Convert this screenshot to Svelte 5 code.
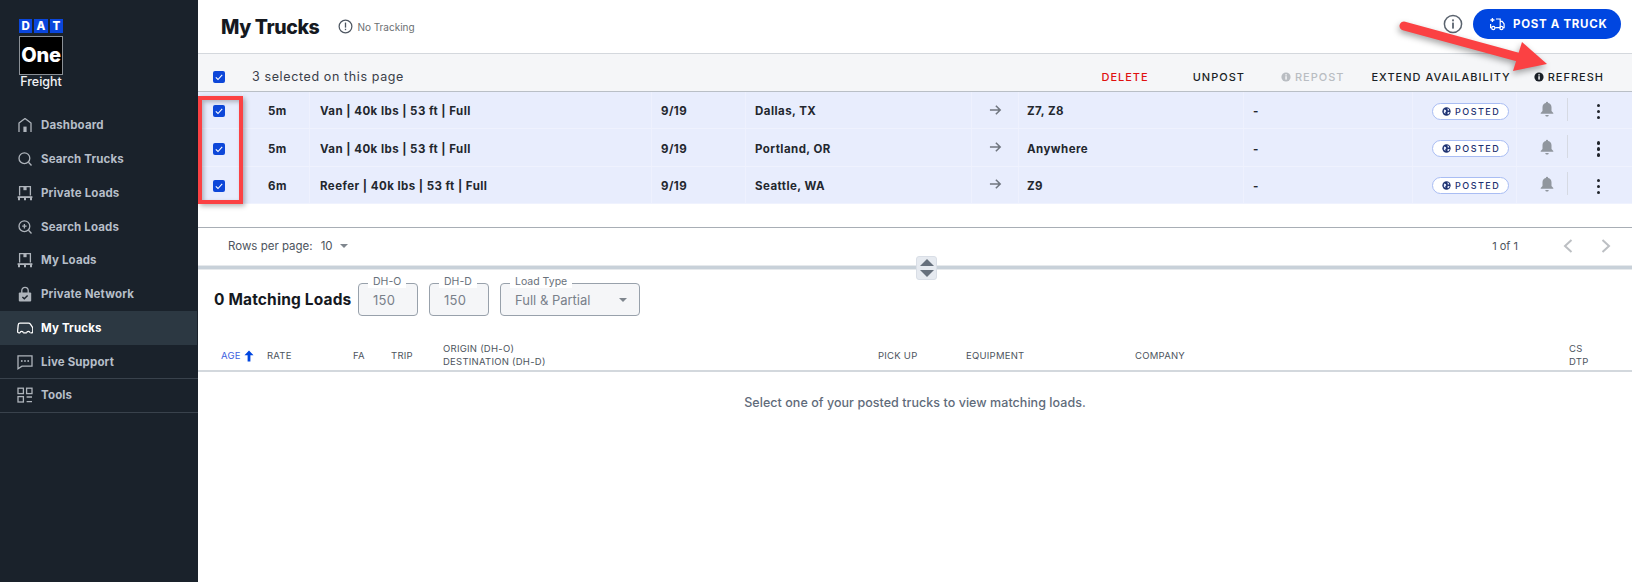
<script>
  const nav = [
    { label: 'Dashboard', icon: 'home' },
    { label: 'Search Trucks', icon: 'search' },
    { label: 'Private Loads', icon: 'load' },
    { label: 'Search Loads', icon: 'searchplus' },
    { label: 'My Loads', icon: 'load' },
    { label: 'Private Network', icon: 'lock' },
    { label: 'My Trucks', icon: 'truck', active: true },
    { label: 'Live Support', icon: 'chat' },
    { label: 'Tools', icon: 'tools' }
  ];
  const rows = [
    { age: '5m', equip: 'Van | 40k lbs | 53 ft | Full', date: '9/19', origin: 'Dallas, TX', dest: 'Z7, Z8' },
    { age: '5m', equip: 'Van | 40k lbs | 53 ft | Full', date: '9/19', origin: 'Portland, OR', dest: 'Anywhere' },
    { age: '6m', equip: 'Reefer | 40k lbs | 53 ft | Full', date: '9/19', origin: 'Seattle, WA', dest: 'Z9' }
  ];
  const heads = [
    { cls: 'h-rate', lines: ['RATE'] },
    { cls: 'h-fa', lines: ['FA'] },
    { cls: 'h-trip', lines: ['TRIP'] },
    { cls: 'h-origin', lines: ['ORIGIN (DH-O)', 'DESTINATION (DH-D)'] },
    { cls: 'h-pick', lines: ['PICK UP'] },
    { cls: 'h-equip', lines: ['EQUIPMENT'] },
    { cls: 'h-company', lines: ['COMPANY'] },
    { cls: 'h-cs', lines: ['CS', 'DTP'] }
  ];
</script>

{#snippet check()}
  <span class="check">
    <svg viewBox="0 0 12 12" width="12" height="12"><path d="M2.8 6.3l2.2 2.2 4.2-4.6" fill="none" stroke="#fff" stroke-width="1.1"/></svg>
  </span>
{/snippet}

{#snippet infoDot(color)}
  <svg class="info-dot" viewBox="0 0 10 10" width="10" height="10">
    <circle cx="5" cy="5" r="4.6" fill={color}/>
    <rect x="4.3" y="4.2" width="1.5" height="3.4" fill="#f5f6f8"/>
    <rect x="4.3" y="2.2" width="1.5" height="1.3" fill="#f5f6f8"/>
  </svg>
{/snippet}

{#snippet navIcon(name)}
  <svg class="nav-icon" viewBox="0 0 16 16" width="16" height="16" fill="none" stroke="currentColor" stroke-width="1.3">
    {#if name === 'home'}
      <path d="M2 15V6L8 1.600 14 6v9" stroke-linejoin="round"/>
      <rect x="6.400" y="9.600" width="3.200" height="5.400" fill="currentColor" stroke="none"/>
    {:else if name === 'search'}
      <circle cx="7.400" cy="7.200" r="5.400"/><path d="M11.500 11.300l3 3.200"/>
    {:else if name === 'searchplus'}
      <circle cx="7.400" cy="7.200" r="5.400"/><path d="M11.500 11.300l3 3.200M7.400 5v4.400M5.200 7.200h4.400" />
    {:else if name === 'load'}
      <path d="M2.600 10.600V1.600h10.800v9"/>
      <rect x="6.400" y="1.600" width="3.200" height="3.600" fill="currentColor" stroke="none"/>
      <rect x="0.600" y="11.200" width="14.800" height="1.800" fill="currentColor" stroke="none"/>
      <path d="M2 13v2.200M8 13v2.200M14 13v2.200" stroke-width="2"/>
    {:else if name === 'lock'}
      <path d="M4.800 7V4.600C4.800 2.700 6.200 1.400 8 1.400s3.200 1.300 3.200 3.200V7"/>
      <rect x="1.800" y="6.600" width="12.400" height="8.800" rx="1" fill="currentColor" stroke="none"/>
      <path d="M5.400 11l1.900 1.800 3.300-3.400" stroke="#1a222b" stroke-width="1.400"/>
    {:else if name === 'truck'}
      <path d="M3.200 12.800H2C1 12.800.5 12.200.6 11.200L1.200 5c.1-1.100.7-1.800 1.800-1.800h8.600c.8 0 1.300.3 1.800 1l2 2.900c.3.500.4.900.4 1.400v2.900c0 .9-.4 1.400-1.300 1.400h-1.100M6.200 12.800h3.600"/>
      <path d="M3.200 12.800a1.500 1.500 0 0 1 3 0M9.800 12.800a1.500 1.500 0 0 1 3 0"/>
    {:else if name === 'chat'}
      <path d="M1 1.800h14v10.400H5l-4 2.600z"/>
      <circle cx="4.800" cy="7" r=".9" fill="currentColor" stroke="none"/>
      <circle cx="8" cy="7" r=".9" fill="currentColor" stroke="none"/>
      <circle cx="11.200" cy="7" r=".9" fill="currentColor" stroke="none"/>
    {:else if name === 'tools'}
      <rect x="1" y="1.200" width="5.400" height="5.400"/><rect x="9.600" y="1.200" width="5.400" height="5.400"/>
      <rect x="1" y="9.600" width="5.400" height="5.400"/><path d="M9.600 10h5.400M9.600 14.600h5.400"/>
    {/if}
  </svg>
{/snippet}

<div class="app">
  <aside class="sidebar">
    <div class="logo">
      <div class="dat"><span>D</span><span>A</span><span>T</span></div>
      <div class="one">One</div>
      <div class="freight">Freight</div>
    </div>
    <nav>
      {#each nav as item}
        <div class="nav-item" class:active={item.active}>
          {@render navIcon(item.icon)}
          <span>{item.label}</span>
        </div>
      {/each}
    </nav>
  </aside>

  <main class="main">
    <header class="topbar">
      <h1>My Trucks</h1>
      <svg class="warn" viewBox="0 0 16 16" width="15" height="15" fill="none">
        <circle cx="8" cy="8" r="6.800" stroke="#4d5661" stroke-width="1.300"/>
        <rect x="7.300" y="3.800" width="1.400" height="5.400" fill="#4d5661"/>
        <rect x="7.300" y="10.400" width="1.400" height="1.500" fill="#4d5661"/>
      </svg>
      <span class="tracking">No Tracking</span>
      <span class="grow"></span>
      <svg class="help" viewBox="0 0 20 20" width="20" height="20" fill="none">
        <circle cx="10" cy="10" r="8.600" stroke="#5a636e" stroke-width="1.500"/>
        <rect x="9.100" y="8.600" width="1.800" height="6" fill="#5a636e"/>
        <rect x="9.100" y="5.400" width="1.800" height="1.900" fill="#5a636e"/>
      </svg>
      <button class="post">
        <svg viewBox="0 0 16 14" width="16" height="14" fill="none" stroke="#fff" stroke-width="1.200">
          <path d="M3.400 1v4M1.400 3h4" stroke-width="1.300"/>
          <path d="M7 2h4.200v8.600H6.200M11.200 4.400h2l1.900 2.600v3.600h-1.200M1.600 7v3.600h1"/>
          <circle cx="4.300" cy="11" r="1.600"/><circle cx="12.400" cy="11" r="1.600"/>
        </svg>
        POST A TRUCK
      </button>
    </header>

    <section class="toolbar">
      <div class="tb-check">{@render check()}</div>
      <span class="selected">3 selected on this page</span>
      <span class="grow"></span>
      <span class="act delete">DELETE</span>
      <span class="act unpost">UNPOST</span>
      <span class="act repost">{@render infoDot('#b9bdc2')} REPOST</span>
      <span class="act extend">EXTEND AVAILABILITY</span>
      <span class="act refresh">{@render infoDot('#1a1f26')} REFRESH</span>
    </section>

    <section class="rows">
      {#each rows as r}
        <div class="row">
          <div class="cell c-check">{@render check()}</div>
          <div class="cell c-age">{r.age}</div>
          <div class="cell c-equip">{r.equip}</div>
          <div class="cell c-date">{r.date}</div>
          <div class="cell c-origin">{r.origin}</div>
          <div class="cell c-arrow">
            <svg viewBox="0 0 14 12" width="13" height="12" fill="none" stroke="#70767f" stroke-width="1.700"><path d="M1 6h11M7.400 1.400L12 6l-4.600 4.600"/></svg>
          </div>
          <div class="cell c-dest">{r.dest}</div>
          <div class="cell c-dash">-</div>
          <div class="cell c-status">
            <span class="pill">
              <svg viewBox="0 0 10 10" width="9" height="9"><circle cx="5" cy="5" r="4.600" fill="#1d3170"/><path d="M2.200 2.800l2 .4.600 1.400-1.200 1.200.2 2L2 6zM6 1.400l1.600.8.400 1.600-1.600.2zM6.400 5.400l2.200.4-1.400 2.200-1.200-.2z" fill="#e8edfd"/></svg>
              POSTED
            </span>
          </div>
          <div class="cell c-bell">
            <svg viewBox="0 0 14 16" width="14" height="16"><path d="M7 0.800c.7 0 1.100.4 1.200 1.100 2.100.5 3.300 2.200 3.300 4.400v3.600l1.800 2.200v.6H.7v-.6l1.800-2.200V6.300c0-2.200 1.200-3.900 3.300-4.400C5.900 1.200 6.300.8 7 .8z" fill="#90969e"/><path d="M5.300 14h3.400c0 1-.7 1.600-1.700 1.600S5.300 15 5.300 14z" fill="#90969e"/></svg>
            <i class="sep"></i>
          </div>
          <div class="cell c-menu"><i></i><i></i><i></i></div>
        </div>
      {/each}
    </section>

    <section class="pager">
      <span class="rpp">Rows per page:</span>
      <span class="rpp-val">10</span>
      <span class="caret small"></span>
      <span class="grow"></span>
      <span class="count">1 of 1</span>
      <svg class="chev" viewBox="0 0 10 14" width="10" height="14" fill="none" stroke="#bcbfc3" stroke-width="2"><path d="M8.500 1L2 7l6.500 6"/></svg>
      <svg class="chev next" viewBox="0 0 10 14" width="10" height="14" fill="none" stroke="#bcbfc3" stroke-width="2"><path d="M1.500 1L8 7l-6.500 6"/></svg>
    </section>

    <div class="resizer">
      <div class="handle">
        <span class="tri up"></span>
        <span class="tri down"></span>
      </div>
    </div>

    <section class="filters">
      <h2>0 Matching Loads</h2>
      <div class="field f-o"><label for="dho">DH-O</label><span id="dho">150</span></div>
      <div class="field f-d"><label for="dhd">DH-D</label><span id="dhd">150</span></div>
      <div class="field f-type"><label for="lt">Load Type</label><span id="lt">Full &amp; Partial</span><span class="caret"></span></div>
    </section>

    <section class="thead">
      <div class="h-age">AGE
        <svg viewBox="0 0 10 12" width="10" height="12"><path d="M5 .5L9.500 5.200H6.400V11.500H3.600V5.200H.5z" fill="#0046e0"/></svg>
      </div>
      {#each heads as h}
        <div class={h.cls}>{#each h.lines as l}<div>{l}</div>{/each}</div>
      {/each}
    </section>

    <p class="empty">Select one of your posted trucks to view matching loads.</p>
  </main>

  <div class="red-box"></div>
  <svg class="red-arrow" viewBox="0 0 160 60" width="160" height="60">
    <path d="M9 9L130 42" stroke="#fb4143" stroke-width="9" stroke-linecap="round"/>
    <polygon points="127,25 152,47 118,54" fill="#fb4143"/>
  </svg>
</div>

<style>
  :global(body) { margin: 0; font-family: Inter, "Liberation Sans", sans-serif; }
  .app { display: flex; position: relative; width: 1632px; height: 582px; overflow: hidden; background: #fff; color: #1f2630; }
  .grow { flex: 1; }

  .sidebar { width: 198px; flex: none; background: #1a222b; color: #b6bec8; }
  .logo { height: 108px; box-sizing: border-box; padding: 19px 0 0 19px; }
  .dat { display: flex; gap: 2px; width: 44px; justify-content: space-between; }
  .dat span { width: 13.500px; height: 14px; background: #0a46dc; color: #fff; font-size: 11.500px; font-weight: 800; text-align: center; line-height: 14px; }
  .one { width: 44px; height: 39px; margin-top: 3px; box-sizing: border-box; background: #000; border: 1px solid #8b9096; color: #fff; font-size: 20px; font-weight: 800; line-height: 36px; text-align: center; letter-spacing: -0.3px; }
  .freight { width: 44px; color: #f2f3f4; font-size: 12.500px; font-weight: 500; line-height: 14px; text-align: center; }
  .nav-item { display: flex; align-items: center; height: 33.875px; box-sizing: border-box; padding-left: 17px; font-size: 11.500px; font-weight: 700; letter-spacing: 0.15px; }
  .nav-item:nth-child(n+8) { border-bottom: 1px solid #39424c; }
  .nav-item span { margin-left: 8px; }
  .nav-icon { color: #aeb4bb; flex: none; }
  .nav-item.active { background: #2c3842; color: #fff; width: 197px; }
  .nav-item.active .nav-icon { color: #fff; }

  .main { flex: 1; min-width: 0; display: flex; flex-direction: column; }
  .topbar { display: flex; align-items: center; height: 54px; box-sizing: border-box; padding: 0 11px 0 23px; border-bottom: 1px solid #d4d8dd; }
  h1 { margin: 0; font-size: 19.500px; font-weight: 800; letter-spacing: -0.4px; color: #15191f; }
  .warn { margin-left: 19px; }
  .tracking { margin-left: 4px; font-size: 10px; color: #6b6f72; }
  .help { margin: 0 10px 5px 0; }
  .post { display: flex; align-items: center; gap: 8px; width: 148px; height: 30px; box-sizing: border-box; margin: 0 0 5px; padding: 0 0 0 16px; border: 0; border-radius: 15px; background: #0046e0; color: #fff; font: 700 11.500px Inter, sans-serif; letter-spacing: 0.7px; white-space: nowrap; }

  .toolbar { display: flex; align-items: center; height: 38px; box-sizing: border-box; padding: 8px 28px 0 15px; background: #f5f6f8; border-bottom: 1px solid #b9bfc6; }
  .tb-check { display: flex; width: 39px; }
  .selected { font-size: 12.500px; letter-spacing: 0.62px; color: #3a4049; }
  .act { display: flex; align-items: center; gap: 4px; font-size: 11px; font-weight: 500; letter-spacing: 1px; white-space: nowrap; color: #1a1f26; }
  .delete { color: #e01010; }
  .unpost { margin-left: 44px; }
  .repost { margin-left: 36px; color: #b9bdc2; }
  .extend { margin-left: 27px; }
  .refresh { margin-left: 23px; }
  .check { display: inline-flex; width: 12px; height: 12px; border-radius: 2px; background: #0d47d9; }

  .rows { background: #e8edfd; }
  .row { display: grid; grid-template-columns: 45px 67px 342px 94px 226px 47px 225px 169px 104px 63px 52px; height: 37.400px; border-bottom: 1px solid #eff2fe; box-sizing: border-box; }
  .cell { display: flex; align-items: center; padding-top: 2px; border-right: 1px solid #eef1fe; font-size: 11.500px; font-weight: 700; letter-spacing: 0.45px; color: #23272e; white-space: nowrap; }
  .c-check { padding-left: 15px; }
  .c-age { padding-left: 25px; }
  .c-equip { padding-left: 10px; }
  .c-date, .c-origin, .c-dash { padding-left: 9px; }
  .c-arrow { padding-left: 17px; padding-bottom: 3px; }
  .c-dest { padding-left: 8px; }
  .c-status { padding-left: 19px; }
  .pill { display: flex; align-items: center; gap: 4px; width: 77px; height: 17px; box-sizing: border-box; padding-left: 9px; border: 1px solid #a9bdf3; border-radius: 9px; background: #fff; font-size: 9px; font-weight: 500; letter-spacing: 1.500px; color: #1d3170; }
  .c-bell { padding: 0 0 2px 23px; gap: 13px; border-right: 0; }
  .sep { display: block; width: 1px; height: 23px; background: #d6dae3; }
  .c-menu { flex-direction: column; justify-content: center; gap: 2.500px; padding: 3px 32px 0 0; border-right: 0; align-items: flex-end; }
  .c-menu i { display: block; width: 3.500px; height: 3.500px; border-radius: 50%; background: #20242b; }

  .pager { display: flex; align-items: center; height: 38px; box-sizing: border-box; margin-top: 22.800px; padding: 0 21px 0 30px; border-top: 1px solid #a8aeb5; font-size: 11.500px; color: #4d545d; }
  .rpp-val { margin-left: 8px; }
  .caret { display: inline-block; width: 0; height: 0; border: 4px solid transparent; border-top: 4.500px solid #7f868e; border-bottom: 0; }
  .caret.small { margin-left: 7px; }
  .count { color: #4d545d; font-size: 11px; }
  .chev { margin-left: 45px; }
  .next { margin-left: 28px; }

  .resizer { position: relative; flex: none; height: 5px; background: #c8d1d9; border-top: 1px solid #e6e9ec; border-bottom: 1px solid #e6e9ec; box-sizing: border-box; }
  .handle { position: absolute; left: 718px; top: -10px; display: flex; flex-direction: column; align-items: center; justify-content: space-around; box-sizing: border-box; width: 21px; height: 24px; border-radius: 3px; background: #e6eaf0; border: 1px solid #d9dee6; }
  .tri { width: 0; height: 0; border-left: 7px solid transparent; border-right: 7px solid transparent; }
  .tri.up { border-bottom: 7px solid #66707c; }
  .tri.down { border-top: 7px solid #66707c; }

  .filters { display: flex; align-items: center; height: 60px; padding: 0 0 0 16px; box-sizing: border-box; }
  h2 { margin: 0; font-size: 15.500px; font-weight: 700; letter-spacing: 0.15px; color: #15191f; width: 144px; white-space: nowrap; }
  .field { position: relative; display: flex; align-items: center; height: 33px; box-sizing: border-box; padding-left: 14px; border: 1px solid #98a1ab; border-radius: 4px; background: #f5f6f8; font-size: 13px; color: #79808a; letter-spacing: 0.3px; }
  .field label { position: absolute; left: 9px; top: -9px; padding: 0 5px; background: #fff; font-size: 10.500px; line-height: 13px; letter-spacing: 0; color: #69717b; }
  .f-o { width: 60px; }
  .f-d { width: 60px; margin-left: 11px; }
  .f-type { width: 140px; margin-left: 11px; justify-content: space-between; padding-right: 12px; letter-spacing: 0; }

  .thead { display: flex; align-items: center; height: 32px; margin-top: 10px; box-sizing: border-box; padding-top: 2px; border-bottom: 2px solid #d3d8dd; font-size: 9.500px; letter-spacing: 0.25px; line-height: 12.500px; color: #4d545d; }
  .thead > div { flex: none; }
  .h-age { width: 46px; margin-left: 23px; color: #3d5fe0; display: flex; align-items: center; gap: 3px; }
  .h-rate { width: 86px; }
  .h-fa { width: 38px; }
  .h-trip { width: 52px; }
  .h-origin { width: 435px; }
  .h-pick { width: 88px; }
  .h-equip { width: 169px; }
  .h-company { width: 434px; }

  .empty { margin: 23.500px 0 0; text-align: center; font-size: 12.500px; font-weight: 500; color: #5f6b7a; letter-spacing: 0.05px; }

  .red-box { position: absolute; left: 198px; top: 96px; width: 45px; height: 108px; box-sizing: border-box; border: 4px solid #fb4143; box-shadow: 2px 2px 5px rgba(0,0,0,.3), inset 2px 2px 4px rgba(0,0,0,.25); }
  .red-arrow { position: absolute; left: 1395px; top: 17px; filter: drop-shadow(-1px 3px 3px rgba(0,0,0,.35)); }
</style>
